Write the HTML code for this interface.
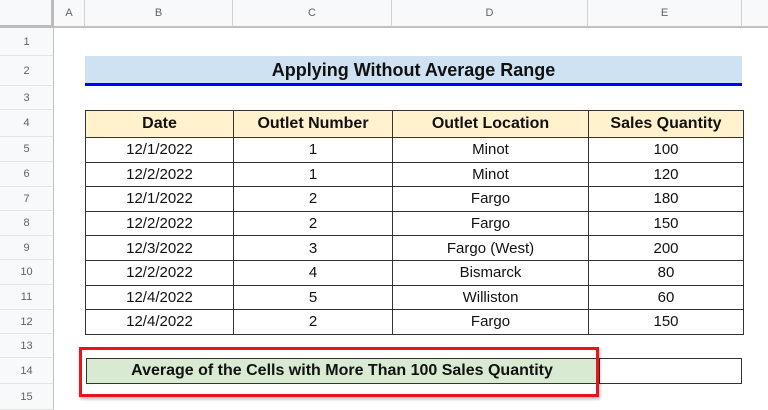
<!DOCTYPE html>
<html><head><style>
body{margin:0;width:768px;height:410px;overflow:hidden;background:#fff;font-family:"Liberation Sans",Arial,sans-serif;position:relative}
.a{position:absolute;box-sizing:border-box}
.rh{position:absolute;left:0;width:54px;background:#f8f9fa;border-right:1px solid #c0c0c0;border-bottom:1px solid #e2e3e3;color:#5f6368;font-size:11px;display:flex;align-items:center;justify-content:center;box-sizing:border-box}
.ch{position:absolute;top:0;height:28px;background:#f8f9fa;border-right:1px solid #d0d0d0;border-bottom:2px solid #c0c0c0;color:#5f6368;font-size:11px;display:flex;align-items:center;justify-content:center;box-sizing:border-box}
table{position:absolute;left:85px;top:110px;width:658px;table-layout:fixed;border-collapse:collapse;font-size:15px;color:#111}
td{border:1px solid #333;text-align:center;padding:0;height:24.6px;box-sizing:border-box}
th{border:1px solid #333;background:#fff2cc;font-weight:bold;font-size:16px;height:27px;padding:0;box-sizing:border-box}
</style></head><body>
<div class="ch" style="left:0;width:54px;border-right:3px solid #bbb;border-bottom:3px solid #bbb"></div>
<div class="ch" style="left:54px;width:31px">A</div>
<div class="ch" style="left:85px;width:148px">B</div>
<div class="ch" style="left:233px;width:159px">C</div>
<div class="ch" style="left:392px;width:196px">D</div>
<div class="ch" style="left:588px;width:154px">E</div>
<div class="ch" style="left:742px;width:30px"></div>
<div class="rh" style="top:28px;height:28px">1</div>
<div class="rh" style="top:56px;height:30px">2</div>
<div class="rh" style="top:86px;height:24px">3</div>
<div class="rh" style="top:110px;height:27px">4</div>
<div class="rh" style="top:137px;height:25px">5</div>
<div class="rh" style="top:162px;height:25px">6</div>
<div class="rh" style="top:187px;height:24px">7</div>
<div class="rh" style="top:211px;height:25px">8</div>
<div class="rh" style="top:236px;height:24px">9</div>
<div class="rh" style="top:260px;height:25px">10</div>
<div class="rh" style="top:285px;height:25px">11</div>
<div class="rh" style="top:310px;height:24px">12</div>
<div class="rh" style="top:334px;height:24px">13</div>
<div class="rh" style="top:358px;height:26px">14</div>
<div class="rh" style="top:384px;height:26px">15</div>
<div class="a" style="left:85px;top:56px;width:657px;height:30px;background:#cfe2f3;border-bottom:3px solid #0000ff;font-weight:bold;font-size:18px;text-align:center;line-height:28px;color:#111">Applying Without Average Range</div>
<table>
<colgroup><col style="width:148px"><col style="width:159px"><col style="width:196px"><col style="width:155px"></colgroup>
<tr><th>Date</th><th>Outlet Number</th><th>Outlet Location</th><th>Sales Quantity</th></tr>
<tr><td>12/1/2022</td><td>1</td><td>Minot</td><td>100</td></tr>
<tr><td>12/2/2022</td><td>1</td><td>Minot</td><td>120</td></tr>
<tr><td>12/1/2022</td><td>2</td><td>Fargo</td><td>180</td></tr>
<tr><td>12/2/2022</td><td>2</td><td>Fargo</td><td>150</td></tr>
<tr><td>12/3/2022</td><td>3</td><td>Fargo (West)</td><td>200</td></tr>
<tr><td>12/2/2022</td><td>4</td><td>Bismarck</td><td>80</td></tr>
<tr><td>12/4/2022</td><td>5</td><td>Williston</td><td>60</td></tr>
<tr><td>12/4/2022</td><td>2</td><td>Fargo</td><td>150</td></tr>
</table>
<div class="a" style="left:86px;top:358px;width:512px;height:26px;background:#d9ead3;border:1px solid #333;font-weight:bold;font-size:16px;text-align:center;line-height:24px;color:#111">Average of the Cells with More Than 100 Sales Quantity</div>
<div class="a" style="left:598px;top:358px;width:144px;height:26px;border:1px solid #333;border-left:2px solid #333"></div>
<div class="a" style="left:79px;top:347px;width:520px;height:50px;border:3px solid #e8141c;box-shadow:1px 2px 3px rgba(0,0,0,.3)"></div>
</body></html>
